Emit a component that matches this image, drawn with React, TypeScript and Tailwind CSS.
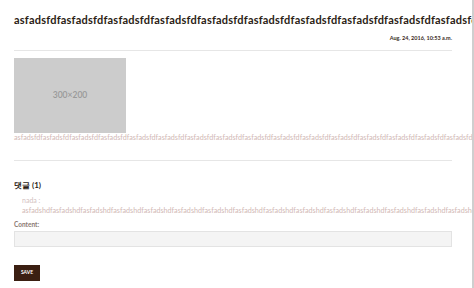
import * as React from "react";

const LONG = "asfadsfdf".repeat(22);
const COMMENT = "asfadshdf".repeat(22);

export default function App() {
  return (
    <div className="flex h-[288px] w-[474px] overflow-hidden bg-white font-['Lato','Liberation_Sans',sans-serif]">
      <div className="min-w-0 flex-1 overflow-hidden pl-[14px] pr-[20px]">
        {/* Post */}
        <h1 className="mt-[13px] whitespace-nowrap text-[11px] font-bold leading-[14px] tracking-[0.2px] text-[#2b1d15]">
          {LONG}
        </h1>
        <div className="mt-[7px] text-right text-[5.5px] font-bold leading-[8px] text-[#3a2c24]">
          Aug. 24, 2016, 10:53 a.m.
        </div>
        <hr className="mt-[8px] border-t border-[#e6e6e6]" />

        <div className="mt-[7px] flex h-[75px] w-[112px] items-center justify-center bg-[#cccccc] text-[8.5px] font-semibold text-[#999999]">
          300×200
        </div>
        <p className="mt-[1px] whitespace-nowrap text-[7.2px] leading-[8px] text-[#d1b8b5]">
          {LONG}
        </p>
        <hr className="mt-[18px] border-t border-[#e6e6e6]" />

        {/* Comments */}
        <h2 className="mt-[19px] text-[8px] font-bold leading-[10px] text-[#2b1d15]">
          댓글 (1)
        </h2>
        <div className="pl-[8px]">
          <div className="mt-[6px] text-[7px] leading-[8px] text-[#d3c1bf]">nada :</div>
          <div className="mt-[3px] whitespace-nowrap text-[7.2px] leading-[8px] text-[#d1b8b5]">
            {COMMENT}
          </div>
        </div>

        <label className="mt-[6px] block text-[6.5px] font-bold leading-[8px] text-[#8b7a72]">
          Content:
        </label>
        <input
          type="text"
          className="mt-[2px] block h-[16px] w-full border border-[#e3e3e3] bg-[#f4f4f4] outline-none"
        />
        <button className="mt-[18px] flex h-[16px] w-[26px] items-center justify-center bg-[#3b1f12] text-[5px] font-bold text-white">
          SAVE
        </button>
      </div>
      <div className="w-[2px] bg-[#cfcfcf]" />
    </div>
  );
}
